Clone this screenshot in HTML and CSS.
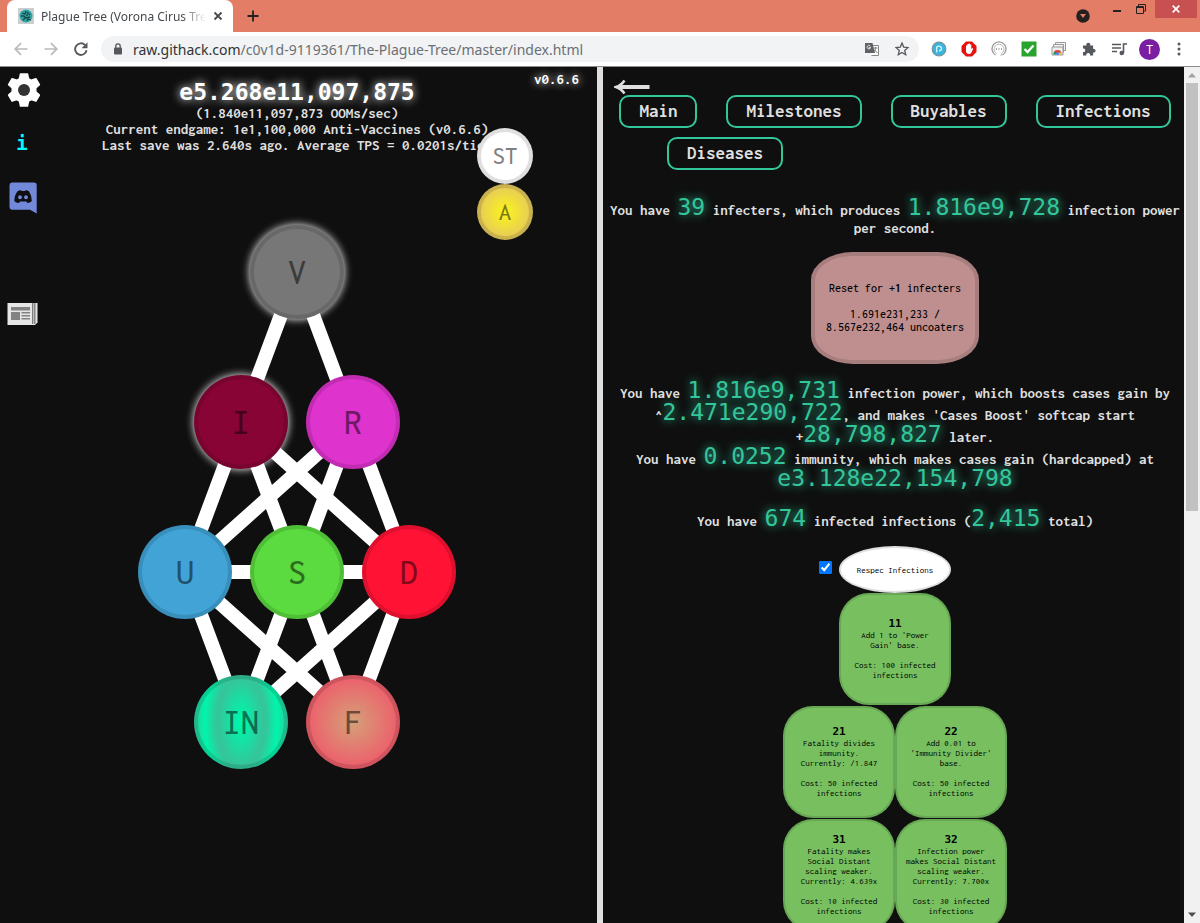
FILE: index.html
```html
<!DOCTYPE html>
<html lang="en">
<head>
<meta charset="utf-8">
<title>Plague Tree (Vorona Cirus Tree)</title>
<link rel="stylesheet" href="styles.css">
</head>
<body>
<header class="chrome">
  <div class="tabstrip">
    <div class="tab">
      <svg class="favicon" width="16" height="16" viewBox="0 0 16 16"><rect width="16" height="16" fill="#c9cfcf"/><circle cx="8" cy="8" r="6.500" fill="#2fa5a5"/><path d="M4 5l3 1 1-3M9 4l3 3M3 8h3l2 2 4-1M5 12l2-2M9 13l1-2 3 1M8 7l2 0" stroke="#1d4747" fill="none" stroke-width="1.300"/></svg>
      <span class="tab-title">Plague Tree (Vorona Cirus Tree)</span>
      <button class="plain" aria-label="Close tab"><svg width="10" height="10" viewBox="0 0 10 10"><path d="M1.500 1.500l7 7M8.500 1.500l-7 7" stroke="#45494d" stroke-width="1.800"/></svg></button>
    </div>
    <button class="plain new-tab" aria-label="New tab"><svg width="12" height="12" viewBox="0 0 12 12"><path d="M6 .5v11M.5 6h11" stroke="#222" stroke-width="1.800"/></svg></button>
    <div class="window-controls">
      <button class="plain guest" aria-label="Tab search"><svg width="14" height="14" viewBox="0 0 14 14"><circle cx="7" cy="7" r="6.800" fill="#25201f"/><path d="M4 5h6L7 9z" fill="#e37d66"/></svg></button>
      <button class="plain minimize" aria-label="Minimize"><svg width="8" height="12" viewBox="0 0 8 12"><path d="M0 11h8" stroke="#222" stroke-width="2"/></svg></button>
      <button class="plain" aria-label="Restore"><svg width="10" height="10" viewBox="0 0 10 10"><path d="M.5 2.500h7v7h-7zM.5 3.500h7M2.500 2V.5h7v6.500H8" fill="none" stroke="#222"/></svg></button>
      <button class="plain close" aria-label="Close"><svg width="8" height="8" viewBox="0 0 8 8"><path d="M.7.7l6.600 6.600M7.300.7L.7 7.300" stroke="#fff" stroke-width="1.700"/></svg></button>
    </div>
  </div>
  <nav class="toolbar">
    <button class="plain tool" aria-label="Back"><svg width="14" height="14" viewBox="0 0 14 14"><path d="M13.500 7H1.500M7 1.200L1.200 7 7 12.800" fill="none" stroke="#bababa" stroke-width="1.700"/></svg></button>
    <button class="plain tool" aria-label="Forward"><svg width="14" height="14" viewBox="0 0 14 14"><path d="M.5 7h12M7 1.200L12.800 7 7 12.800" fill="none" stroke="#bababa" stroke-width="1.700"/></svg></button>
    <button class="plain tool" aria-label="Reload"><svg width="14" height="14" viewBox="0 0 14 14"><path d="M12.600 8.300A5.800 5.800 0 1 1 11 3" fill="none" stroke="#55595e" stroke-width="1.900"/><path d="M13.500.3v6H7.500z" fill="#55595e"/></svg></button>
    <div class="address">
      <svg width="10" height="12" viewBox="0 0 10 12"><rect x="1" y="4.500" width="8" height="7" rx="1" fill="#55595e"/><path d="M2.800 5V3a2.200 2.200 0 0 1 4.400 0v2" fill="none" stroke="#55595e" stroke-width="1.300"/></svg>
      <span class="url"><b>raw.githack.com</b>/c0v1d-9119361/The-Plague-Tree/master/index.html</span>
      <button class="plain" aria-label="Translate"><svg width="14" height="14" viewBox="0 0 14 14"><path d="M5.500 3.500h8v10h-7" fill="#fff" stroke="#888"/><path d="M0 1h7.500l2.500 10H0z" fill="#5f6368"/><path d="M6 5.300H4v1h1.300A1.800 1.800 0 1 1 5 3.700" stroke="#ddd" fill="none"/><path d="M8 6h4.500M10.500 5v1.500Q10 9 8.500 10M9.500 8l3 3" stroke="#777" fill="none"/></svg></button>
      <button class="plain" aria-label="Bookmark"><svg width="14" height="14" viewBox="0 0 14 14"><path d="M7 1l1.700 4.100 4.400.4-3.400 2.900 1 4.300L7 10.400l-3.700 2.300 1-4.300L.9 5.500l4.400-.4z" fill="none" stroke="#55595e" stroke-width="1.300"/></svg></button>
    </div>
    <div class="extensions">
      <button class="plain" aria-label="Pushbullet"><svg width="16" height="16" viewBox="0 0 14 14"><circle cx="7" cy="7" r="6" fill="#3ab5dd" stroke="#76909b"/><path d="M5 10V6Q5 4.500 7 4.500t2.200 2Q9.200 8.500 7 8.500" fill="none" stroke="#d5f4ff" stroke-width="1.200"/></svg></button>
      <button class="plain" aria-label="Ad blocker"><svg width="16" height="16" viewBox="0 0 16 16"><path d="M5 .5h6L15.500 5v6L11 15.500H5L.5 11V5z" fill="#e5120f"/><path d="M5 8V4.500h1.300V3h1.400v-.5h1.300V3.500h1.300V8l1-1 .9.800-2 4.200Q9.500 13 8 13q-3 0-3-3z" fill="#fff"/></svg></button>
      <button class="plain" aria-label="Downloader"><svg width="16" height="16" viewBox="0 0 16 16"><path d="M4.500 14A7 7 0 1 1 11.500 14" fill="none" stroke="#999" stroke-width="1.300"/><path d="M5.500 12.500A5 5 0 1 1 10.500 12.500L10 15" fill="none" stroke="#bbb"/><path d="M5 8h1m1.500 0h1m1.500 0h1" stroke="#888" stroke-width="1.500"/></svg></button>
      <button class="plain" aria-label="Checker"><svg width="16" height="16" viewBox="0 0 16 16"><rect x=".5" y=".5" width="15" height="15" fill="#28a32d"/><path d="M3.500 8l3 3 6-6.500" fill="none" stroke="#fff" stroke-width="2.300"/></svg></button>
      <button class="plain" aria-label="Gallery"><svg width="16" height="16" viewBox="0 0 16 16"><path d="M4.500 4V1.500h10v8H12M2.500 6V3.500h10v8" fill="#f3f3f3" stroke="#999"/><path d="M1 6h11v8H1z" fill="#eee" stroke="#999"/><path d="M2.500 13a4 4 0 0 1 8 0z" fill="#db4437"/><path d="M2.500 13.500a4 4 0 0 1 1-3l2 3z" fill="#0f9d58"/><path d="M10.500 13.500a4 4 0 0 0-.5-2H7.500l-.5 2z" fill="#f4c430"/><circle cx="6.500" cy="12.500" r="1.600" fill="#4285f4"/></svg></button>
      <button class="plain" aria-label="Extensions"><svg width="14" height="14" viewBox="0 0 14 14"><path d="M1 3.500h3.500a2 2 0 1 1 3.600 0h3v3.400a1.900 1.900 0 1 1 0 3.600V13.500H8a1.900 1.900 0 1 0-3.600 0H1V10a1.800 1.800 0 1 0 0-3.500z" fill="#55595e"/></svg></button>
      <button class="plain" aria-label="Media"><svg width="16" height="14" viewBox="0 0 16 14"><path d="M1 2.500h9M1 6h9M1 9.500h5M12.500 11V2h3.500" fill="none" stroke="#55595e" stroke-width="1.600"/><circle cx="10.800" cy="11" r="2.300" fill="#55595e"/></svg></button>
      <button class="plain profile">T</button>
      <button class="plain" aria-label="Menu"><svg width="4" height="14" viewBox="0 0 4 14"><g fill="#55595e"><circle cx="2" cy="2" r="1.500"/><circle cx="2" cy="7" r="1.500"/><circle cx="2" cy="12" r="1.500"/></g></svg></button>
    </div>
  </nav>
</header>

<main class="game">
  <section class="tree-pane">
    <div class="overview">
      <h1 class="points">e5.268e11,097,875</h1>
      <p>(1.840e11,097,873 OOMs/sec)</p>
      <p>Current endgame: 1e1,100,000 Anti-Vaccines (v0.6.6)</p>
      <p>Last save was 2.640s ago. Average TPS = 0.0201s/tick</p>
    </div>

    <div class="side-links">
      <button class="plain" aria-label="Settings"><svg width="34" height="34" viewBox="0 0 34 34"><path fill="#fff" stroke="#fff" stroke-width="1.500" stroke-linejoin="round" d="M13.500 1h7l1 4.700 2.800 1.600 4.600-1.600 3.500 6-3.600 3.200v3.900l3.600 3.300-3.500 6-4.600-1.500-2.800 1.600-1 4.800h-7l-1-4.800-2.800-1.600-4.600 1.500-3.500-6 3.600-3.300v-3.900L1.600 11.700l3.500-6 4.600 1.600 2.800-1.600z"/><circle cx="17" cy="17" r="6" fill="#333"/></svg></button>
      <button class="plain info">i</button>
      <a href="#discord" class="discord" aria-label="Discord"><svg width="28" height="32" viewBox="0 0 28 32"><path fill="#7289da" d="M3 .5h22a2.700 2.700 0 0 1 2.700 2.700V31.500L21 27.700H3A2.700 2.700 0 0 1 .5 25V3.200A2.700 2.700 0 0 1 3 .5z"/><path fill="#0f0f0f" d="M8.500 9.300q2-1.200 3.500-1l.5.700h3.500l.5-.7q1.500-.2 3.500 1 2.800 4.500 2.800 9.700-1.500 2-4.500 2l-1-1.600h-6.300L10 21q-3.500-.2-4.700-2 0-5.500 3.200-9.700z"/><ellipse cx="11" cy="15.300" rx="1.900" ry="2" fill="#7289da"/><ellipse cx="17" cy="15.300" rx="1.900" ry="2" fill="#7289da"/></svg></a>
      <button class="plain news" aria-label="News"><svg width="31" height="24" viewBox="0 0 31 24"><path fill="#e6e6e6" d="M.5 1h30v19.500l-2.500 2.500H.5z"/><path stroke="#777" stroke-width="1.300" d="M25.700 1v21M27.800 1v21"/><path fill="#828282" d="M4 5h19v3.500H4zM4 10h9v8H4zM14.500 10H23v1.400h-8.500zM14.500 13H23v1.400h-8.500zM14.500 16H23v1.400h-8.500z"/></svg></button>
    </div>

    <div class="corner">
      <a href="#changelog" class="version">v0.6.6</a>
      <button class="node small statistics">ST</button>
      <button class="node small achievements">A</button>
    </div>

    <div class="tree">
      <svg class="branches" width="320" height="544" viewBox="0 0 320 544">
        <g stroke="#fff" stroke-width="14">
          <path d="M160 47L104 197M160 47L216 197"/>
          <path d="M104 197L48 347M104 197L160 347M104 197L272 347"/>
          <path d="M216 197L48 347M216 197L160 347M216 197L272 347"/>
          <path d="M48 347H272"/>
          <path d="M48 347L104 497M48 347L216 497M160 347L104 497M160 347L216 497M272 347L104 497M272 347L216 497"/>
        </g>
      </svg>
      <div class="row"><button class="node vaccines glow">V</button></div>
      <div class="row"><button class="node infecters glow">I</button><button class="node replicators">R</button></div>
      <div class="row"><button class="node uncoaters">U</button><button class="node symptoms">S</button><button class="node deaths">D</button></div>
      <div class="row"><button class="node infectivity">IN</button><button class="node fatality">F</button></div>
    </div>
  </section>

  <div class="divider"></div>

  <div class="layer-scroll">
    <section class="layer-pane">
      <button class="plain back" aria-label="Back to tree"><svg width="36" height="16" viewBox="0 0 36 16"><path d="M35.500 8H4" stroke="#dfdfdf" stroke-width="4"/><path d="M10.500 1.500Q7 6.500 2 8 7 9.500 10.500 14.500" fill="none" stroke="#dfdfdf" stroke-width="2.500"/></svg></button>
      <nav class="tabs">
        <div class="tab-row"><button class="tab-btn">Main</button><button class="tab-btn">Milestones</button><button class="tab-btn">Buyables</button><button class="tab-btn">Infections</button></div>
        <div class="tab-row second"><button class="tab-btn">Diseases</button></div>
      </nav>
      <p class="info-text">You have <b class="num">39</b> infecters, which produces <b class="num">1.816e9,728</b> infection power<br>per second.</p>
      <button class="reset">Reset for +<b>1</b> infecters<br><br>1.691e231,233 /<br>8.567e232,464 uncoaters</button>
      <p class="info-text effects">You have <b class="num">1.816e9,731</b> infection power, which boosts cases gain by<br>^<b class="num">2.471e290,722</b>, and makes 'Cases Boost' softcap start<br>+<b class="num">28,798,827</b> later.<br>You have <b class="num">0.0252</b> immunity, which makes cases gain (hardcapped) at<br><b class="num">e3.128e22,154,798</b></p>
      <p class="info-text currency">You have <b class="num">674</b> infected infections (<b class="num">2,415</b> total)</p>
      <div class="respec-row"><input type="checkbox" checked aria-label="Confirm respec"><button class="respec">Respec Infections</button></div>
      <div class="upgrades">
        <div class="upgrade-row"><button class="upgrade"><b>11</b>Add 1 to 'Power<br>Gain' base.<br><br>Cost: 100 infected<br>infections</button></div>
        <div class="upgrade-row">
          <button class="upgrade"><b>21</b>Fatality divides<br>immunity.<br>Currently: /1.847<br><br>Cost: 50 infected<br>infections</button>
          <button class="upgrade"><b>22</b>Add 0.01 to<br>'Immunity Divider'<br>base.<br><br>Cost: 50 infected<br>infections</button>
        </div>
        <div class="upgrade-row">
          <button class="upgrade"><b>31</b>Fatality makes<br>Social Distant<br>scaling weaker.<br>Currently: 4.639x<br><br>Cost: 10 infected<br>infections</button>
          <button class="upgrade"><b>32</b>Infection power<br>makes Social Distant<br>scaling weaker.<br>Currently: 7.700x<br><br>Cost: 30 infected<br>infections</button>
        </div>
      </div>
    </section>
    <div class="scrollbar">
      <svg width="16" height="16" viewBox="0 0 16 16"><path d="M4 10.500l4-4.500 4 4.500z" fill="#a3a3a3"/></svg>
      <div class="track"><div class="thumb"></div></div>
      <svg width="16" height="16" viewBox="0 0 16 16"><path d="M4 5.500l4 4.500 4-4.500z" fill="#505050"/></svg>
    </div>
  </div>
</main>
</body>
</html>
```

FILE: styles.css
```css
* { box-sizing: border-box; }
body {
  margin: 0;
  height: 100vh;
  display: flex;
  flex-direction: column;
  overflow: hidden;
  background: #0f0f0f;
  color: #dfdfdf;
  font-family: Inconsolata, "Noto Sans Mono CJK JP", "DejaVu Sans Mono", monospace;
}
button { font-family: inherit; margin: 0; cursor: pointer; }
p, h1 { margin: 0; }
svg { display: block; flex: none; }
.plain { border: 0; padding: 0; background: none; }

/* Browser frame */
.chrome { flex: none; background: #fff; border-bottom: 1px solid #8c8c8c; font-family: "Noto Sans", sans-serif; }
.tabstrip { display: flex; height: 32px; background: #e37d66; padding-left: 7px; }
.tab {
  display: flex; align-items: center; gap: 7px;
  width: 226px; padding: 0 10px 0 11px;
  background: #fff; border-radius: 8px 8px 0 0;
}
.tab-title {
  flex: 1; overflow: hidden; white-space: nowrap; font-size: 12px; color: #45494d;
  -webkit-mask-image: linear-gradient(to right, #000 85%, transparent);
  mask-image: linear-gradient(to right, #000 85%, transparent);
}
.new-tab { padding: 0 14px; }
.window-controls { display: flex; align-items: flex-start; margin-left: auto; padding-right: 3px; gap: 19px; }
.window-controls button { padding-top: 4px; }
.window-controls .guest { padding-top: 9px; margin-right: 4px; }
.window-controls .minimize { padding-top: 0; margin-right: -4px; }
.window-controls .close { width: 42px; height: 18px; padding: 5px 17px; background: #c75050; margin-left: -10px; }
.toolbar { display: flex; align-items: center; height: 34px; padding: 0 10px 0 6px; }
.tool { width: 30px; display: flex; justify-content: center; }
.address {
  flex: 1; display: flex; align-items: center; gap: 16px;
  height: 26px; margin-left: 5px; padding: 0 10px 0 12px;
  border-radius: 13px; background: #f1f3f4;
}
.url { flex: 1; margin-left: -6px; font-size: 14px; color: #6b6f74; white-space: nowrap; }
.url b { font-weight: 400; color: #303336; }
.extensions { display: flex; align-items: center; padding-left: 5px; }
.extensions button { width: 30px; display: flex; justify-content: center; }
.extensions button:last-child { margin-right: -4px; }
.extensions .profile {
  width: 21px; height: 21px; margin: 0 4px 0 5px; border-radius: 50%;
  align-items: center; background: #7b1fa2; color: #fff; font: 12px "Noto Sans", sans-serif;
}

/* Game */
.game { flex: 1; min-height: 0; display: grid; grid-template-columns: minmax(0, 1fr) 6px minmax(0, 1fr); grid-template-rows: minmax(0, 1fr); }
.tree-pane { position: relative; padding: 12px 3px 0 0; overflow: hidden; }
.divider { background: #dfdfdf; }
.layer-scroll { display: flex; min-height: 0; }
.layer-pane {
  flex: 1; min-width: 0; overflow: hidden; padding-left: 3px;
  display: flex; flex-direction: column; align-items: center;
}
.overview { text-align: center; font-size: 15px; line-height: 16px; font-weight: 700; white-space: nowrap; }
.points {
  font: bold 23px/26px "DejaVu Sans Mono", monospace;
  color: #fff; text-shadow: 0 0 10px #fff;
}
.side-links { position: absolute; left: 7px; top: 6px; display: flex; flex-direction: column; align-items: flex-start; }
.info { width: 30px; margin-top: 22px; font: bold 19px/28px "DejaVu Sans Mono", monospace; color: #00fbff; }
.discord { margin: 25px 0 0 2px; }
.news { margin-top: 88px; }
.corner { position: absolute; right: 18px; top: 3px; display: flex; flex-direction: column; align-items: flex-end; }
.version {
  color: #fff; text-decoration: none; font-size: 15px; font-weight: 700; line-height: 18px;
  text-shadow: 0 0 8px #fff; margin-bottom: 40px;
}
.corner .node { margin-right: 46px; }
.tree { position: relative; display: flex; flex-direction: column; gap: 56px; margin-top: 72px; }
.branches { position: absolute; top: 0; left: 50%; margin-left: -160px; }
.row { position: relative; display: flex; justify-content: center; gap: 18px; }
.node {
  width: 94px; height: 94px; padding: 0; border-radius: 50%;
  border: 4px solid rgba(0, 0, 0, 0.125);
  background-origin: border-box;
  color: rgba(0, 0, 0, 0.5); font-size: 36px; line-height: 36px; font-weight: 500;
}
.node.small { width: 56px; height: 56px; font-size: 25px; line-height: 25px; }
.statistics { background-color: #fff; }
.achievements { background-image: radial-gradient(#fbf51b, #e5c95c 70%); }
.vaccines { background-color: #777; }
.infecters { background-color: #880435; }
.replicators { background-color: #de33cc; }
.uncoaters { background-color: #42a4d6; }
.symptoms { background-color: #5bdb3f; }
.deaths { background-color: #ff1234; }
.infectivity { background-image: radial-gradient(ellipse 24px 48px, #00f5ab 10%, #34c69b 90%, #34c69b 105%, #00f5ab 150%, #34c69b 200%); }
.fatality { background-image: radial-gradient(#d5a078, #ed5e6b 70%); }
.glow { box-shadow: 0 0 8px #fff; }

.back { align-self: flex-start; margin: 12px 0 0 8px; }
.tabs { display: flex; flex-direction: column; align-items: center; gap: 9px; align-self: stretch; }
.tab-row { display: flex; gap: 29px; }
.second { padding-right: 340px; }
.tab-btn {
  border: 2px solid #34c69b; border-radius: 10px; background: none; color: #dfdfdf;
  padding: 0 18px; font-size: 19px; line-height: 29px; font-weight: 700;
}
.info-text { text-align: center; font-size: 15px; line-height: 18px; font-weight: 700; white-space: nowrap; margin-top: 27px; }
.num {
  font: 23px/21px "DejaVu Sans Mono", monospace;
  color: #34c69b; text-shadow: 0 0 10px #34c69b;
}
.reset {
  width: 168px; min-height: 112px; margin-top: 15px; padding: 0;
  border: 4px solid rgba(0, 0, 0, 0.125); border-radius: 25%;
  background: #bf8f8f; color: #000; font-size: 12px; line-height: 13px; font-weight: 500; white-space: nowrap;
}
.effects { margin-top: 16px; }
.currency { margin-top: 18px; }
.respec-row {
  display: grid; grid-template-columns: 1fr auto 1fr; align-items: center; align-self: stretch;
  margin-top: 16px;
}
.respec-row input { justify-self: end; width: 13px; height: 13px; margin: 0 7px 4px 0; }
.respec {
  width: 112px; height: 47px; padding: 0; border: 2px solid rgba(0, 0, 0, 0.125); border-radius: 50%;
  background: #fff; color: #000; font-size: 9px;
}
.upgrades { display: flex; flex-direction: column; gap: 1px; }
.upgrade-row { display: flex; justify-content: center; }
.upgrade {
  width: 112px; height: 112px; padding: 0; border: 2px solid rgba(0, 0, 0, 0.125); border-radius: 30px;
  background: #77bf5f; color: #000; font-size: 9px; line-height: 10px; white-space: nowrap;
}
.upgrade b { display: block; font: bold 11px/12px "DejaVu Sans Mono", monospace; }

.scrollbar { flex: none; width: 16px; display: flex; flex-direction: column; background: #f1f1f1; }
.track { flex: 1; padding: 0 2px; }
.thumb { height: 52%; background: #c1c1c1; }
```
